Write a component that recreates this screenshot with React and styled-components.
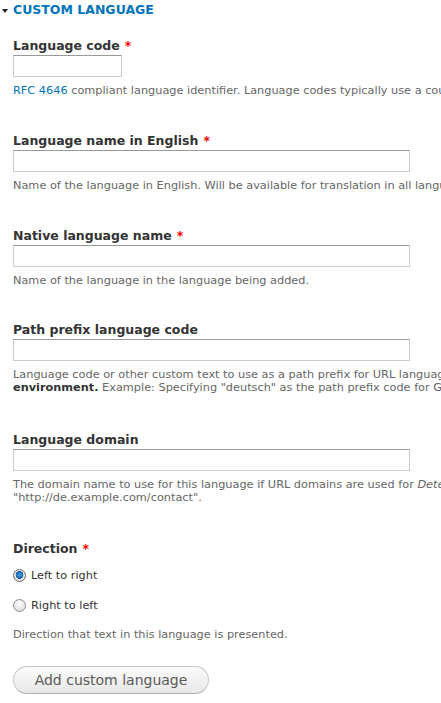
import React from 'react';
import styled, { createGlobalStyle } from 'styled-components';

const GlobalStyle = createGlobalStyle`
  html, body {
    margin: 0;
    padding: 0;
    background: #fff;
    overflow: hidden;
  }
  body {
    font-family: 'DejaVu Sans', Verdana, sans-serif;
    color: #333;
  }
`;

const Fieldset = styled.section`
  width: 900px;
  padding: 1px 0 20px 13px;
`;

const Legend = styled.div`
  position: relative;
  height: 18px;
  line-height: 18px;
  font-size: 12.5px;
  font-weight: bold;
  text-transform: uppercase;
  color: #0074bd;
  &::before {
    content: '';
    position: absolute;
    left: -11px;
    top: 8px;
    border-left: 3.5px solid transparent;
    border-right: 3.5px solid transparent;
    border-top: 4px solid #222;
  }
`;

const Field = styled.div`
  margin-top: ${(p) => p.$top || 36}px;
`;

const Label = styled.label`
  display: block;
  font-size: 12.5px;
  font-weight: bold;
  line-height: 16px;
  color: #333;
  margin-bottom: 1px;
`;

const Required = styled.span`
  color: #e00;
  margin-left: 5px;
`;

const TextInput = styled.input`
  display: block;
  box-sizing: border-box;
  width: ${(p) => p.$width}px;
  height: 22px;
  margin: 0;
  padding: 2px 4px;
  border: 1px solid #ccc;
  border-top-color: #999;
  border-radius: 0;
  background: #fff;
  font-family: inherit;
  font-size: 12px;
  outline: none;
`;

const Description = styled.div`
  margin-top: ${(p) => p.$top || 7}px;
  font-size: 11.3px;
  line-height: 13px;
  color: #666;
  white-space: nowrap;
  a {
    color: #0074bd;
    text-decoration: none;
  }
  strong {
    color: #333;
  }
`;

const RadioList = styled.div`
  display: flex;
  flex-direction: column;
  gap: 12px;
  margin-top: 9px;
`;

const RadioRow = styled.label`
  display: flex;
  align-items: center;
  gap: 5px;
  height: 18px;
  font-size: 11.3px;
  color: #333;
`;

const Radio = styled.input`
  appearance: none;
  box-sizing: border-box;
  width: 13px;
  height: 13px;
  margin: 0;
  border-radius: 50%;
  border: 1px solid #8f8f8f;
  background: radial-gradient(circle at 50% 35%, #fff 0%, #e6e6e6 60%, #cfcfcf 100%);
  &:checked {
    background:
      radial-gradient(circle at 50% 45%, #4aa3df 0%, #1b6fb5 38%, #1a4f86 46%, transparent 50%),
      radial-gradient(circle at 50% 35%, #fff 0%, #e6e6e6 60%, #cfcfcf 100%);
    border-color: #6b6b6b;
  }
`;

const Actions = styled.div`
  margin-top: 25px;
`;

const Button = styled.button`
  box-sizing: border-box;
  width: 196px;
  height: 28px;
  padding: 0 0 1px;
  border: 1px solid #c8c8c8;
  border-bottom-color: #b0b0b0;
  border-radius: 14px;
  background: linear-gradient(#fbfbfb, #e8e8e8);
  font-family: inherit;
  font-size: 14px;
  color: #5a5a5a;
  cursor: pointer;
`;

export default function App() {
  return (
    <>
      <GlobalStyle />
      <Fieldset>
        <Legend>Custom language</Legend>

        <Field $top={19}>
          <Label>
            Language code<Required>*</Required>
          </Label>
          <TextInput $width={109} />
          <Description>
            <a href="#rfc">RFC 4646</a> compliant language identifier. Language codes typically use a country
            code, and optionally, a script or regional variant name. <em>Examples: "en", "en-US" and "zh-Hant".</em>
          </Description>
        </Field>

        <Field>
          <Label>
            Language name in English<Required>*</Required>
          </Label>
          <TextInput $width={397} />
          <Description>Name of the language in English. Will be available for translation in all languages.</Description>
        </Field>

        <Field>
          <Label>
            Native language name<Required>*</Required>
          </Label>
          <TextInput $width={397} />
          <Description>Name of the language in the language being added.</Description>
        </Field>

        <Field $top={35}>
          <Label>Path prefix language code</Label>
          <TextInput $width={397} />
          <Description>
            Language code or other custom text to use as a path prefix for URL language detection, if your{' '}
            <em>Detection and selection</em> settings use URL path prefixes. <strong>Modifying this value may break existing URLs. Use with caution in a production</strong>
            <br />
            <strong>environment.</strong> Example: Specifying "deutsch" as the path prefix code for German results in URLs like "example.com/deutsch/contact".
          </Description>
        </Field>

        <Field $top={38}>
          <Label>Language domain</Label>
          <TextInput $width={397} />
          <Description>
            The domain name to use for this language if URL domains are used for <em>Detection and selection</em>. Leave blank for the default language. <strong>Changing this value may break existing URLs.</strong> Example: Specifying "de.example.com" as language domain for German will result in an URL like
            <br />
            "http://de.example.com/contact".
          </Description>
        </Field>

        <Field $top={37}>
          <Label>
            Direction<Required>*</Required>
          </Label>
          <RadioList>
            <RadioRow>
              <Radio type="radio" name="direction" defaultChecked />
              Left to right
            </RadioRow>
            <RadioRow>
              <Radio type="radio" name="direction" />
              Right to left
            </RadioRow>
          </RadioList>
          <Description $top={14}>Direction that text in this language is presented.</Description>
        </Field>

        <Actions>
          <Button type="button">Add custom language</Button>
        </Actions>
      </Fieldset>
    </>
  );
}
